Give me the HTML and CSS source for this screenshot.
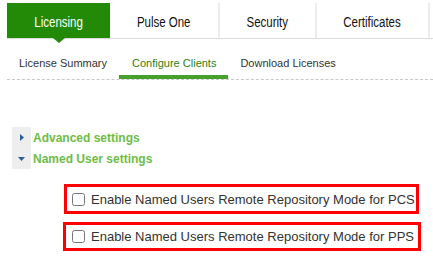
FILE: index.html
```html
<!DOCTYPE html>
<html>
<head>
<meta charset="utf-8">
<link rel="stylesheet" href="styles.css">
</head>
<body>
<div class="page">
  <div class="tabs">
    <div class="tab tab-active"><span class="tab-text">Licensing</span><span class="tab-pointer"></span></div>
    <div class="tab tab-pulse"><span class="tab-text">Pulse One</span></div>
    <div class="tab tab-security"><span class="tab-text">Security</span></div>
    <div class="tab tab-certs"><span class="tab-text">Certificates</span></div>
  </div>
  <div class="subtabs">
    <div class="subtab">License Summary</div>
    <div class="subtab subtab-active">Configure Clients</div>
    <div class="subtab">Download Licenses</div>
  </div>
  <div class="sections">
    <div class="section-row">
      <span class="toggle"><svg width="4" height="7" viewBox="0 0 4 7"><polygon points="0,0 4,3.5 0,7" fill="#2c5f9e"/></svg></span>
      <span class="section-label">Advanced settings</span>
    </div>
    <div class="section-row">
      <span class="toggle"><svg width="7" height="4" viewBox="0 0 7 4"><polygon points="0,0 7,0 3.5,4" fill="#2c5f9e"/></svg></span>
      <span class="section-label">Named User settings</span>
    </div>
  </div>
  <div class="options">
    <label class="option option-pcs"><input type="checkbox" class="cb">Enable Named Users Remote Repository Mode for PCS</label>
    <label class="option option-pps"><input type="checkbox" class="cb">Enable Named Users Remote Repository Mode for PPS</label>
  </div>
</div>
</body>
</html>
```
FILE: styles.css
```css
html, body {
  margin: 0;
  padding: 0;
  background: #fff;
}
body {
  font-family: "Liberation Sans", Arial, sans-serif;
  color: #333;
  width: 433px;
  height: 270px;
  overflow: hidden;
}
.page {
  padding-top: 3px;
}
.tabs {
  display: flex;
  margin-left: 7px;
  height: 35px;
  border-bottom: 1px solid #dcdcdc;
}
.tab {
  position: relative;
  display: flex;
  align-items: center;
  justify-content: center;
  height: 35px;
  box-sizing: border-box;
  border-right: 2px solid #ececec;
  color: #111;
}
.tab-text {
  display: inline-block;
  font-family: "Liberation Sans", Arial, sans-serif;
  font-size: 14px;
  padding-top: 2px;
  transform: scaleX(0.82);
}
.tab-active {
  width: 103px;
  background: #238a08;
  color: #fff;
  border-right: none;
}
.tab-pulse { width: 110px; }
.tab-security { width: 97px; }
.tab-certs { width: 113px; }
.tab-pointer {
  position: absolute;
  left: 50%;
  bottom: -5px;
  margin-left: -6px;
  width: 0;
  height: 0;
  border-left: 6px solid transparent;
  border-right: 6px solid transparent;
  border-top: 5px solid #238a08;
}
.subtabs {
  display: flex;
  margin: 12px 0 0 7px;
  border-bottom: 1px dashed #c8c8c8;
}
.subtab {
  font-size: 11px;
  line-height: 14px;
  padding: 5px 12px 5px 12px;
  border-bottom: 4px solid transparent;
  color: #333;
}
.subtab-active {
  color: #2f7d12;
  border-bottom-color: #45a12b;
  padding-left: 13px;
  padding-right: 12px;
}
.sections {
  margin: 47px 0 0 12px;
}
.section-row {
  display: flex;
  align-items: center;
  height: 21px;
}
.toggle {
  width: 19px;
  height: 21px;
  background: #eeeeee;
  display: flex;
  align-items: center;
  justify-content: center;
  margin-right: 2px;
}
.section-label {
  font-size: 12px;
  font-weight: bold;
  color: #6fbd45;
}
.options {
  display: flex;
  flex-direction: column;
  gap: 8px;
  margin: 15px 0 0 63px;
}
.option {
  display: flex;
  align-items: center;
  height: 30px;
  box-sizing: border-box;
  border: 3px solid #ff0000;
  font-size: 13px;
  color: #333;
}
.option-pcs {
  width: 355px;
  margin-left: 1px;
  padding-left: 5px;
}
.option-pps {
  width: 358px;
  height: 29px;
  padding-left: 6px;
}
.cb {
  margin: 0 6px 0 0;
  width: 13px;
  height: 13px;
}
```
